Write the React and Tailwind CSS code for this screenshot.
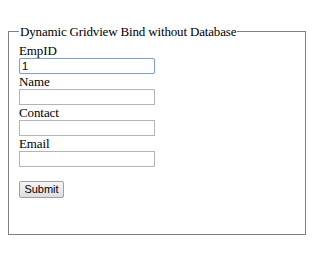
import React, { useState } from 'react';

const Field = ({ label, value, onChange, focused }) => (
  <div className="flex flex-col">
    <label className="text-[13px] leading-[15px] tracking-[-0.1px] text-black">{label}</label>
    <input
      value={value}
      onChange={onChange}
      className={`w-[136px] h-[16px] px-[2px] text-[11px] leading-[14px] font-['Liberation_Sans',sans-serif] bg-white outline-none ${
        focused
          ? 'border border-[#7da2ce] rounded-[2px] shadow-[0_0_1px_#a5c4ee]'
          : 'border border-[#b4b4b4]'
      }`}
    />
  </div>
);

export default function App() {
  const [form, setForm] = useState({ empId: '1', name: '', contact: '', email: '' });

  const update = (key) => (e) => setForm({ ...form, [key]: e.target.value });

  return (
    <div className="w-[320px] h-[263px] bg-white font-['Liberation_Serif',serif] pt-[24px] pl-[8px]">
      <fieldset className="w-[298px] h-[211px] border border-[#7f7f7f] pl-[10px] pr-[10px] pt-[4px]">
        <legend className="text-[13px] leading-[15px] tracking-[-0.16px] px-[1px] text-black">
          Dynamic Gridview Bind without Database
        </legend>
        <div className="flex flex-col">
          <Field label="EmpID" value={form.empId} onChange={update('empId')} focused />
          <Field label="Name" value={form.name} onChange={update('name')} />
          <Field label="Contact" value={form.contact} onChange={update('contact')} />
          <Field label="Email" value={form.email} onChange={update('email')} />
        </div>
        <button className="mt-[14px] h-[17px] w-[45px] text-[11px] leading-[15px] font-['Liberation_Sans',sans-serif] text-black border border-[#a0a0a0] rounded-[2px] bg-gradient-to-b from-[#f5f5f5] to-[#dedede]">
          Submit
        </button>
      </fieldset>
    </div>
  );
}
